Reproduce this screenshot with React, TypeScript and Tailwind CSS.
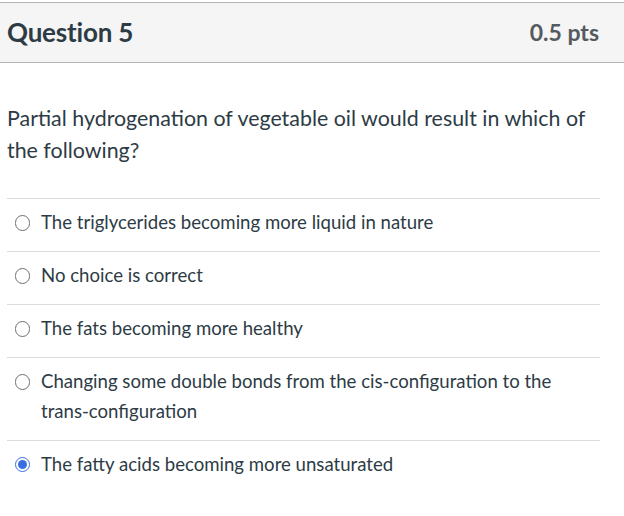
import { useState } from 'react';

const answers = [
  'The triglycerides becoming more liquid in nature',
  'No choice is correct',
  'The fats becoming more healthy',
  'Changing some double bonds from the cis-configuration to the trans-configuration',
  'The fatty acids becoming more unsaturated',
];

export default function App() {
  const [picked, setPicked] = useState(4);

  return (
    <div className="w-[624px] h-[516px] bg-white pt-[2px] text-[#2d3b45] overflow-hidden" style={{ fontFamily: 'Lato, "Open Sans", sans-serif' }}>
      {/* Header */}
      <div className="flex items-center justify-between h-[61px] bg-[#f5f5f5] border-y border-[#b3b3b3] pl-[7px] pr-[25px]">
        <h2 className="text-[26px] font-bold text-[#2d3b45] tracking-[-0.2px]">Question 5</h2>
        <span className="text-[23px] font-bold text-[#555a5e]">0.5 pts</span>
      </div>

      {/* Body */}
      <div className="pl-[7px] w-[600px]">
        <p className="mt-[39px] text-[21.4px] leading-[32px] pr-[6px]">
          Partial hydrogenation of vegetable oil would result in which of the following?
        </p>

        <div className="mt-[32px]">
          {answers.map((a, i) => (
            <label
              key={i}
              onClick={() => setPicked(i)}
              className="flex items-start gap-[11px] border-t border-[#d9dcde] pt-[9px] pb-[13.5px] pl-[7.5px] cursor-pointer"
            >
              <span className="mt-[7px] shrink-0">
                {picked === i ? (
                  <span className="flex items-center justify-center w-[15.5px] h-[15.5px] rounded-full border-[1.5px] border-[#3a6fe0] bg-white">
                    <span className="w-[9px] h-[9px] rounded-full bg-[#3a6fe0]" />
                  </span>
                ) : (
                  <span className="block w-[15.5px] h-[15.5px] rounded-full border-[1.5px] border-[#6b7075] bg-white" />
                )}
              </span>
              <span className="text-[18.6px] leading-[29.5px]">{a}</span>
            </label>
          ))}
        </div>
      </div>
    </div>
  );
}
